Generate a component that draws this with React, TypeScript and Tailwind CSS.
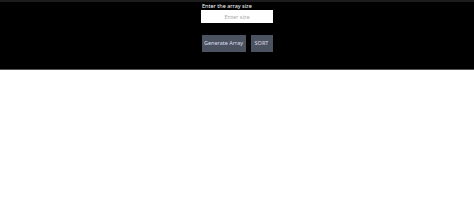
export default function App() {
  return (
    <div className="min-h-screen bg-white font-['Noto_Sans',sans-serif]">
      <div className="border-t-2 border-[#1c1c1c] border-b border-b-[#555] bg-black h-[70px] flex flex-col items-center">
        <div className="w-[72px] mt-[1px]">
          <label className="block text-[5.5px] leading-[7px] pl-[1px] text-white">Enter the array size</label>
          <input
            type="text"
            placeholder="Enter size"
            className="block w-[72px] h-[13px] bg-white text-center text-[5.5px] text-black placeholder:text-[#aaa] outline-none"
          />
        </div>
        <div className="flex gap-[5px] mt-[12px]">
          <button className="w-[44px] h-[17px] bg-[#4b5260] text-[5.5px] text-[#dde]">Generate Array</button>
          <button className="w-[22px] h-[17px] bg-[#4b5260] text-[5.5px] text-[#dde]">SORT</button>
        </div>
      </div>
    </div>
  )
}
